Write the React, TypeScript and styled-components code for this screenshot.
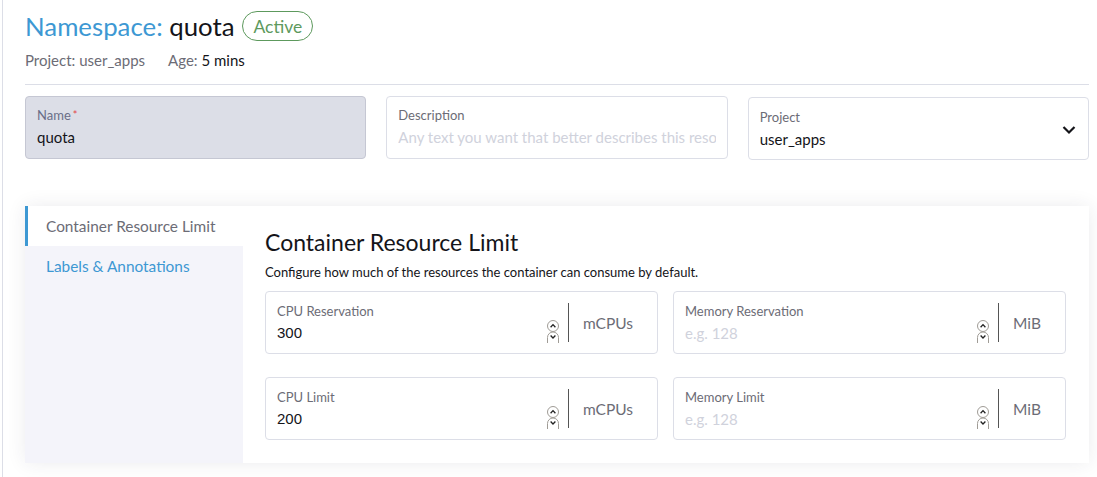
import styled, { createGlobalStyle } from "styled-components";

const GlobalStyle = createGlobalStyle`
  html, body {
    margin: 0;
    padding: 0;
    background: #ffffff;
    font-family: Lato, "Noto Sans", sans-serif;
    color: #141419;
  }
`;

const Page = styled.div`
  margin-left: 2px;
  min-height: 477px;
  border-left: 1px solid #dcdee7;
  padding: 8px 8px 0 22px;
  box-sizing: border-box;
`;

const TitleRow = styled.div`
  display: flex;
  align-items: center;
  gap: 8px;
  height: 36px;
`;

const Title = styled.h1`
  margin: 0;
  font-size: 25.8px;
  font-weight: 400;
  line-height: 34px;
  color: #141419;
  span {
    color: #3d98d3;
  }
`;

const Badge = styled.div`
  display: flex;
  align-items: center;
  height: 28px;
  padding: 0 10px;
  border: 1px solid #5d995d;
  border-radius: 15px;
  font-size: 17.5px;
  color: #5d995d;
`;

const Meta = styled.div`
  display: flex;
  gap: 23px;
  margin-top: 6px;
  font-size: 15px;
  line-height: 20px;
  color: #6c6c76;
  b {
    font-weight: 400;
    color: #141419;
  }
`;

const Divider = styled.hr`
  margin: 14px 0 0;
  border: 0;
  border-top: 1px solid #dcdee7;
`;

const FieldRow = styled.div`
  display: grid;
  grid-template-columns: repeat(3, minmax(0, 1fr));
  gap: 20px;
  margin-top: 11px;
  align-items: start;
`;

const Field = styled.div<{ $disabled?: boolean; $offset?: number }>`
  position: relative;
  height: 63px;
  box-sizing: border-box;
  margin-top: ${(p) => p.$offset ?? 0}px;
  padding: ${(p) => 9 + (p.$offset ?? 0)}px 11px 9px;
  border: 1px solid ${(p) => (p.$disabled ? "#c5c7d3" : "#dcdee7")};
  border-radius: 4px;
  background: ${(p) => (p.$disabled ? "#dcdee7" : "#ffffff")};
`;

const Label = styled.div<{ $muted?: boolean }>`
  font-size: 13px;
  line-height: 18px;
  color: ${(p) => (p.$muted ? "#6a6e87" : "#6c6c76")};
  em {
    font-style: normal;
    color: #e34a4a;
    font-size: 11px;
    vertical-align: top;
    margin-left: 2px;
  }
`;

const Value = styled.div<{ $placeholder?: boolean }>`
  margin-top: 3px;
  font-size: 15px;
  line-height: 20px;
  white-space: nowrap;
  overflow: hidden;
  color: ${(p) => (p.$placeholder ? "#d0d2dc" : "#141419")};
`;

const Chevron = styled.div`
  position: absolute;
  right: 11px;
  top: 24px;
  width: 16px;
  height: 16px;
`;

const Tabbed = styled.div`
  display: flex;
  margin-top: 46px;
  box-shadow: 0 0 18px rgba(40, 40, 70, 0.09);
`;

const Sidebar = styled.div`
  width: 218px;
  flex-shrink: 0;
  background: #f4f4fa;
`;

const Tab = styled.div<{ $active?: boolean }>`
  height: 40px;
  display: flex;
  align-items: center;
  box-sizing: border-box;
  padding-left: 18px;
  font-size: 15.4px;
  border-left: 3px solid ${(p) => (p.$active ? "#3d98d3" : "transparent")};
  background: ${(p) => (p.$active ? "#ffffff" : "transparent")};
  color: ${(p) => (p.$active ? "#6c6c76" : "#3d98d3")};
`;

const Panel = styled.div`
  flex: 1;
  min-width: 0;
  background: #ffffff;
  padding: 22px 23px 23px 22px;
`;

const Heading = styled.h2`
  margin: 0;
  font-size: 23px;
  font-weight: 400;
  line-height: 28px;
`;

const Hint = styled.p`
  margin: 7px 0 0;
  font-size: 13px;
  line-height: 18px;
`;

const Grid = styled.div`
  display: grid;
  grid-template-columns: repeat(2, minmax(0, 1fr));
  column-gap: 15px;
  row-gap: 23px;
  margin-top: 10px;
`;

const UnitBox = styled.div`
  display: flex;
  align-items: stretch;
  height: 63px;
  box-sizing: border-box;
  border: 1px solid #dcdee7;
  border-radius: 4px;
`;

const InputPart = styled.div`
  flex: 1;
  min-width: 0;
  padding: 10px 11px;
`;

const NumValue = styled(Value)<{ $placeholder?: boolean }>`
  font-family: ${(p) =>
    p.$placeholder ? "Lato, sans-serif" : '"Liberation Sans", Arial, sans-serif'};
`;

const Spinner = styled.div`
  align-self: flex-end;
  margin: 0 8px 10px 0;
  width: 14px;
  height: 24px;
`;

const Sep = styled.div`
  width: 1px;
  margin: 11px 0;
  background: #555;
`;

const Unit = styled.div`
  display: flex;
  align-items: center;
  padding: 0 24px 0 14px;
  font-size: 15.5px;
  color: #6c6c76;
`;

const SpinIcon = () => (
  <svg width="14" height="24" viewBox="0 0 14 24" fill="none">
    <rect x="1.5" y="1.5" width="11" height="11" rx="5.5" stroke="#a09c96" />
    <path d="M4.6 8.2 L7 5.6 L9.4 8.2" stroke="#222" strokeWidth="1.3" />
    <path d="M1.5 24 V18.5 a5.5 5.5 0 0 1 11 0 V24" stroke="#a09c96" />
    <path d="M4.6 16.5 L7 19 L9.4 16.5" stroke="#222" strokeWidth="1.3" />
  </svg>
);

type Limit = { label: string; value?: string; placeholder?: string; unit: string };

const limits: Limit[] = [
  { label: "CPU Reservation", value: "300", unit: "mCPUs" },
  { label: "Memory Reservation", placeholder: "e.g. 128", unit: "MiB" },
  { label: "CPU Limit", value: "200", unit: "mCPUs" },
  { label: "Memory Limit", placeholder: "e.g. 128", unit: "MiB" }
];

const App = () => {
  return (
    <>
      <GlobalStyle />
      <Page>
        <TitleRow>
          <Title>
            <span>Namespace:</span> quota
          </Title>
          <Badge>Active</Badge>
        </TitleRow>
        <Meta>
          <div>Project: user_apps</div>
          <div>
            Age: <b>5 mins</b>
          </div>
        </Meta>
        <Divider />

        <FieldRow>
          <Field $disabled>
            <Label $muted>
              Name<em>*</em>
            </Label>
            <Value>quota</Value>
          </Field>
          <Field>
            <Label>Description</Label>
            <Value $placeholder>
              Any text you want that better describes this resource
            </Value>
          </Field>
          <Field $offset={1}>
            <Label>Project</Label>
            <Value>user_apps</Value>
            <Chevron>
              <svg width="16" height="16" viewBox="0 0 16 16" fill="none">
                <path
                  d="M2.5 5 L8 10.5 L13.5 5"
                  stroke="#141419"
                  strokeWidth="2.2"
                />
              </svg>
            </Chevron>
          </Field>
        </FieldRow>

        <Tabbed>
          <Sidebar>
            <Tab $active>Container Resource Limit</Tab>
            <Tab>Labels &amp; Annotations</Tab>
          </Sidebar>
          <Panel>
            <Heading>Container Resource Limit</Heading>
            <Hint>
              Configure how much of the resources the container can consume by
              default.
            </Hint>
            <Grid>
              {limits.map((l) => (
                <UnitBox key={l.label}>
                  <InputPart>
                    <Label>{l.label}</Label>
                    <NumValue $placeholder={!l.value}>
                      {l.value ?? l.placeholder}
                    </NumValue>
                  </InputPart>
                  <Spinner>
                    <SpinIcon />
                  </Spinner>
                  <Sep />
                  <Unit>{l.unit}</Unit>
                </UnitBox>
              ))}
            </Grid>
          </Panel>
        </Tabbed>
      </Page>
    </>
  );
};

export default App;
